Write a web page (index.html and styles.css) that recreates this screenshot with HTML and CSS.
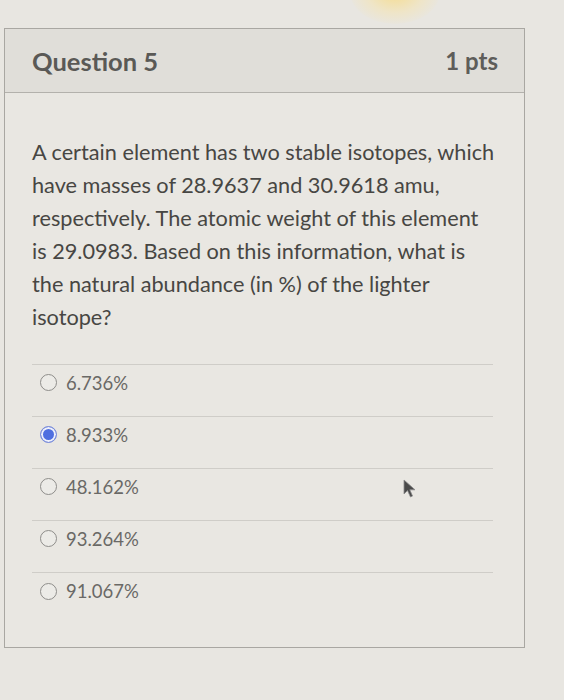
FILE: index.html
```html
<!DOCTYPE html>
<html lang="en">
<head>
    <meta charset="UTF-8">
    <meta name="viewport" content="width=device-width, initial-scale=1.0">
    <title>Question 5</title>
    <link rel="stylesheet" href="styles.css">
</head>
<body>
    <div class="glare"></div>

    <div class="question">
        <div class="question-header">
            <h2>Question 5</h2>
            <span class="points">1 pts</span>
        </div>

        <div class="question-body">
            <p class="question-text">A certain element has two stable isotopes, which have masses of 28.9637 and 30.9618 amu, respectively. The atomic weight of this element is 29.0983. Based on this information, what is the natural abundance (in %) of the lighter isotope?</p>

            <div class="answers">
                <label class="answer"><span class="radio"></span>6.736%</label>
                <label class="answer"><span class="radio checked"></span>8.933%</label>
                <label class="answer">
                    <span class="radio"></span>48.162%
                    <svg class="cursor" width="14" height="20" viewBox="0 0 14 20">
                        <path d="M1 1 L1 15 L4.5 11.5 L7.5 18 L9.5 17 L6.8 10.8 L12 10.8 Z" fill="#4a4a4a" stroke="#8a8a8a" stroke-width="0.8"/>
                    </svg>
                </label>
                <label class="answer"><span class="radio"></span>93.264%</label>
                <label class="answer"><span class="radio"></span>91.067%</label>
            </div>
        </div>
    </div>
</body>
</html>
```

FILE: styles.css
```css
* {
    box-sizing: border-box;
}

body {
    margin: 0;
    padding: 28px 0 0 4px;
    height: 700px;
    overflow: hidden;
    background-color: #e8e6e1;
    font-family: Lato, "Open Sans", sans-serif;
    position: relative;
}

.glare {
    position: absolute;
    top: -40px;
    left: 350px;
    width: 90px;
    height: 64px;
    border-radius: 50%;
    background: radial-gradient(ellipse at center, rgba(255, 214, 90, 0.6) 0%, rgba(255, 226, 140, 0.3) 45%, rgba(232, 230, 225, 0) 75%);
}

.question {
    width: 521px;
    height: 620px;
    border: 1px solid #a9a7a2;
    background-color: #e9e7e2;
}

.question-header {
    height: 64px;
    display: flex;
    justify-content: space-between;
    align-items: center;
    padding: 0 26px 0 27px;
    background-color: #e0ded9;
    border-bottom: 1px solid #b3b1ac;
}

.question-header h2 {
    margin: 0;
    font-size: 25.5px;
    font-weight: 700;
    color: #5a5956;
}

.points {
    font-size: 24px;
    font-weight: 700;
    color: #5e5d5a;
}

.question-body {
    padding: 43px 29px 0 27px;
}

.question-text {
    margin: 0 0 30px;
    font-size: 21.7px;
    line-height: 33px;
    color: #474643;
}

.answers {
    border-top: 1px solid #cfcdc8;
    margin-right: 2px;
}

.answer {
    display: flex;
    align-items: center;
    height: 52px;
    padding: 0 0 16px 8px;
    font-size: 18.5px;
    color: #6a6966;
    border-bottom: 1px solid #cfcdc8;
    position: relative;
}

.answer:last-child {
    border-bottom: none;
}

.radio {
    width: 17px;
    height: 17px;
    border: 1.5px solid #8e8d8a;
    border-radius: 50%;
    margin-right: 9px;
    background-color: #ecebe7;
}

.radio.checked {
    border: 1.5px solid #7f8fd8;
    background-color: #4f6fe0;
    box-shadow: inset 0 0 0 2px #eef0fb;
}

.cursor {
    position: absolute;
    left: 371px;
    top: 10px;
}
```
